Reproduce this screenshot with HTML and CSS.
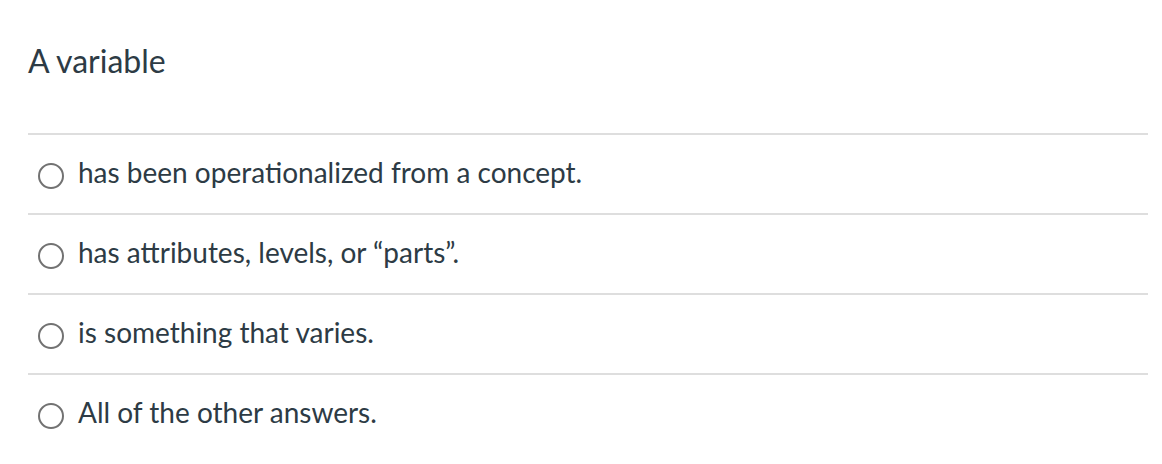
FILE: index.html
```html
<!DOCTYPE html>
<html>
<head>
<meta charset="utf-8">
<link rel="stylesheet" href="styles.css">
</head>
<body>
<div class="question">
  <div class="question-text">A variable</div>
  <div class="answers">
    <label class="answer"><span class="radio"></span><span class="answer-text">has been operationalized from a concept.</span></label>
    <label class="answer"><span class="radio"></span><span class="answer-text">has attributes, levels, or “parts”.</span></label>
    <label class="answer"><span class="radio"></span><span class="answer-text">is something that varies.</span></label>
    <label class="answer"><span class="radio"></span><span class="answer-text">All of the other answers.</span></label>
  </div>
</div>
</body>
</html>
```

FILE: styles.css
```css
html, body {
  margin: 0;
  padding: 0;
  background: #ffffff;
}
body {
  font-family: Lato, "Liberation Sans", sans-serif;
  color: #2d3b45;
}
.question {
  padding: 0 14px 0 28px;
}
.question-text {
  font-size: 32px;
  line-height: 40px;
  padding-top: 41px;
  padding-bottom: 52px;
}
.answers {
  display: flex;
  flex-direction: column;
}
.answer {
  display: flex;
  align-items: center;
  height: 80px;
  border-top: 2px solid #dedede;
  box-sizing: border-box;
  padding-left: 10px;
}
.radio {
  width: 22px;
  height: 22px;
  border: 2px solid #727272;
  border-radius: 50%;
  flex: none;
  margin-right: 14px;
  margin-top: 4px;
}
.answer-text {
  font-size: 28px;
  line-height: 34px;
  margin-bottom: 4px;
}
```
